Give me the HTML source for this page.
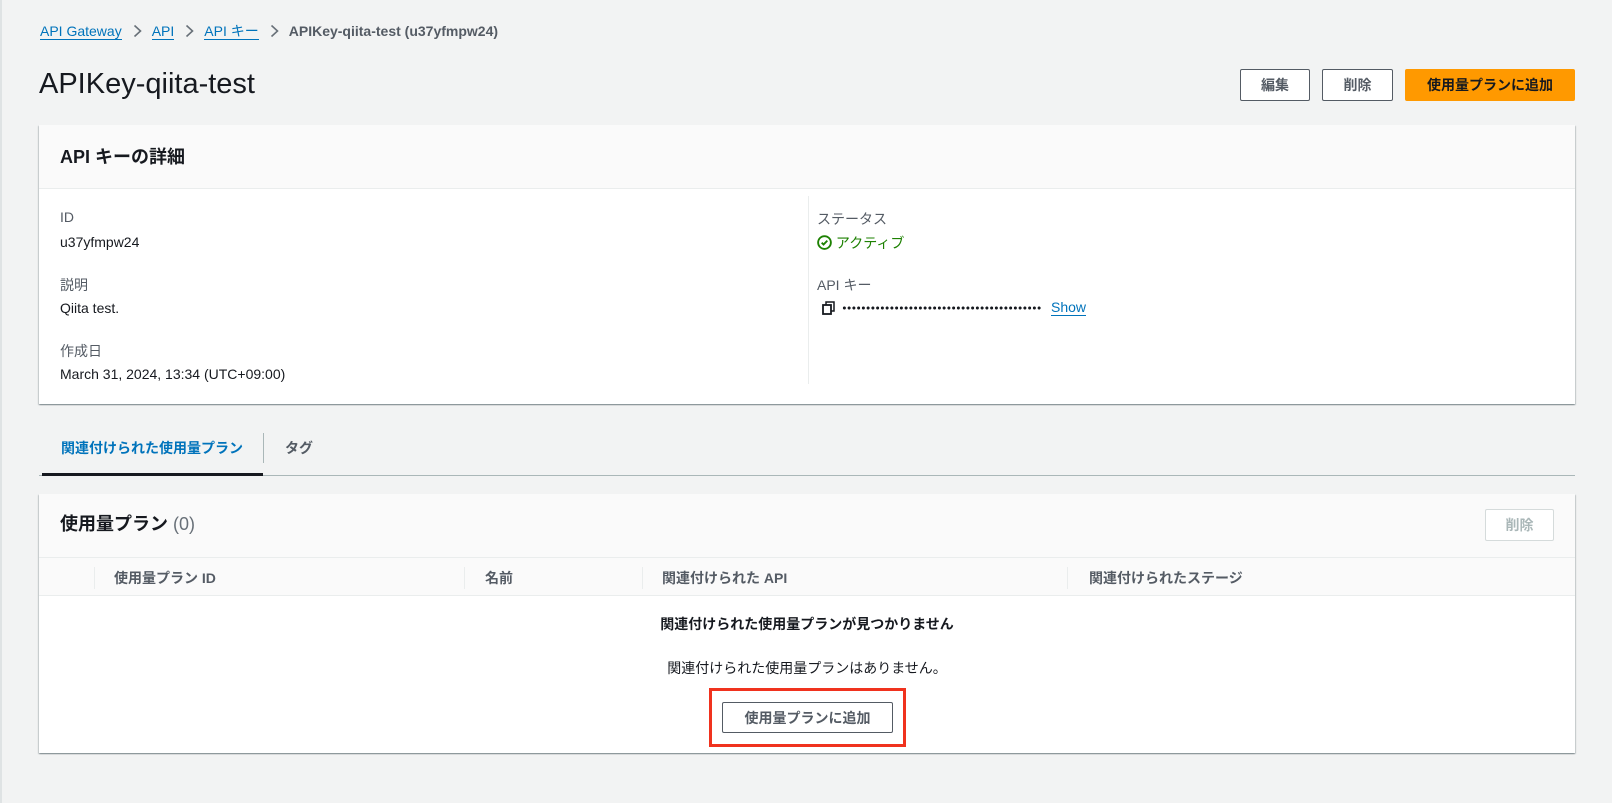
<!DOCTYPE html>
<html><head><meta charset="utf-8">
<style>
*{box-sizing:border-box;margin:0;padding:0}
body{width:1612px;height:803px;background:#f2f3f3;font-family:"Liberation Sans","Noto Sans CJK JP",sans-serif;font-size:14px;color:#16191f;position:relative;overflow:hidden}
.abs{position:absolute;white-space:nowrap}
.lb{border-left:2px solid #dfe3e4;position:absolute;left:0;top:0;bottom:0}
a{color:#0073bb;text-decoration:none;border-bottom:1px solid #0073bb}
.btn{position:absolute;border:1px solid #545b64;border-radius:2px;background:#fff;color:#545b64;font-weight:bold;font-size:14px;display:flex;align-items:center;justify-content:center}
.card{position:absolute;left:39px;width:1536px;background:#fff;box-shadow:0 1px 1px 0 rgba(0,28,36,.3),1px 1px 1px 0 rgba(0,28,36,.15),-1px 1px 1px 0 rgba(0,28,36,.15)}
.lbl{color:#545b64}
.chev{display:inline-block;vertical-align:-2px;margin:0 10px 0 11px}
</style></head><body>
<div class="lb"></div>
<div class="abs" style="left:40px;top:21px;font-size:14px;line-height:20px;color:#545b64">
<a>API Gateway</a><svg class="chev" width="9" height="14" viewBox="0 0 9 14"><path d="M1.5 1.5l6 5.5-6 5.5" fill="none" stroke="#687078" stroke-width="1.6"/></svg><a>API</a><svg class="chev" width="9" height="14" viewBox="0 0 9 14"><path d="M1.5 1.5l6 5.5-6 5.5" fill="none" stroke="#687078" stroke-width="1.6"/></svg><a>API キー</a><svg class="chev" width="9" height="14" viewBox="0 0 9 14"><path d="M1.5 1.5l6 5.5-6 5.5" fill="none" stroke="#687078" stroke-width="1.6"/></svg><b style="color:#545b64">APIKey-qiita-test (u37yfmpw24)</b>
</div>
<div class="abs" style="left:39px;top:66px;font-size:29px;line-height:36px">APIKey-qiita-test</div>
<div class="btn" style="left:1240px;top:69px;width:70px;height:32px">編集</div>
<div class="btn" style="left:1322px;top:69px;width:71px;height:32px">削除</div>
<div class="btn" style="left:1405px;top:69px;width:170px;height:32px;background:#ff9900;border-color:#ff9900;color:#16191f">使用量プランに追加</div>

<div class="card" style="top:125px;height:279px">
 <div style="height:64px;background:#fafafa;border-bottom:1px solid #eaeded"></div>
 <div class="abs" style="left:21px;top:20px;font-size:18px;font-weight:bold;line-height:24px">API キーの詳細</div>
 <div class="abs" style="left:769px;top:71px;width:1px;height:188px;background:#eaeded"></div>
 <div class="abs lbl" style="left:21px;top:84px">ID</div>
 <div class="abs" style="left:21px;top:109px">u37yfmpw24</div>
 <div class="abs lbl" style="left:21px;top:150px">説明</div>
 <div class="abs" style="left:21px;top:175px">Qiita test.</div>
 <div class="abs lbl" style="left:21px;top:216px">作成日</div>
 <div class="abs" style="left:21px;top:241px">March 31, 2024, 13:34 (UTC+09:00)</div>
 <div class="abs lbl" style="left:778px;top:84px">ステータス</div>
 <div class="abs" style="left:778px;top:108px;color:#1d8102"><svg width="15" height="15" viewBox="0 0 16 16" style="vertical-align:-2px"><circle cx="8" cy="8" r="6.8" fill="none" stroke="#1d8102" stroke-width="2"/><path d="M5 8.2l2 2 4-4.2" fill="none" stroke="#1d8102" stroke-width="2"/></svg> アクティブ</div>
 <div class="abs lbl" style="left:778px;top:150px">API キー</div>
 <svg class="abs" style="left:783px;top:176px" width="14" height="14" viewBox="0 0 14 14"><rect x="1" y="4" width="8" height="9" fill="none" stroke="#16191f" stroke-width="1.8"/><path d="M4 4V1h8v9H9" fill="none" stroke="#16191f" stroke-width="1.5"/></svg>
 <div class="abs" style="left:803px;top:181px;width:200px;height:4px;background:radial-gradient(circle,#16191f 1.4px,transparent 1.6px) 0 0/4.75px 4px repeat-x"></div>
 <div class="abs" style="left:1012px;top:174px"><a>Show</a></div>
</div>

<div class="abs" style="left:61px;top:438px;color:#0073bb;font-weight:bold">関連付けられた使用量プラン</div>
<div class="abs" style="left:263px;top:433px;width:1px;height:30px;background:#aab7b8"></div>
<div class="abs" style="left:285px;top:438px;color:#545b64;font-weight:bold">タグ</div>
<div class="abs" style="left:39px;top:475px;width:1536px;height:1px;background:#aab7b8"></div>
<div class="abs" style="left:42px;top:473px;width:221px;height:3px;background:#16191f"></div>

<div class="card" style="top:494px;height:259px">
 <div style="height:64px;background:#fafafa;border-bottom:1px solid #eaeded"></div>
 <div style="height:38px;background:#fafafa;border-bottom:1px solid #eaeded"></div>
 <div class="abs" style="left:21px;top:18px;font-size:18px;font-weight:bold;line-height:24px">使用量プラン <span style="font-weight:normal;color:#687078">(0)</span></div>
 <div class="btn" style="left:1446px;top:15px;width:69px;height:32px;border-color:#d5dbdb;color:#aab7b8">削除</div>
 <div class="abs" style="left:55px;top:73px;width:1px;height:22px;background:#eaeded"></div>
 <div class="abs" style="left:425px;top:73px;width:1px;height:22px;background:#eaeded"></div>
 <div class="abs" style="left:603px;top:73px;width:1px;height:22px;background:#eaeded"></div>
 <div class="abs" style="left:1028px;top:73px;width:1px;height:22px;background:#eaeded"></div>
 <div class="abs" style="left:75px;top:74px;font-weight:bold;color:#545b64">使用量プラン ID</div>
 <div class="abs" style="left:446px;top:74px;font-weight:bold;color:#545b64">名前</div>
 <div class="abs" style="left:623px;top:74px;font-weight:bold;color:#545b64">関連付けられた API</div>
 <div class="abs" style="left:1050px;top:74px;font-weight:bold;color:#545b64">関連付けられたステージ</div>
 <div class="abs" style="left:0;width:1536px;top:120px;text-align:center;font-weight:bold">関連付けられた使用量プランが見つかりません</div>
 <div class="abs" style="left:0;width:1536px;top:164px;text-align:center;color:#16191f">関連付けられた使用量プランはありません。</div>
 <div class="abs" style="left:670px;top:194px;width:197px;height:59px;border:3px solid #f0321e"></div>
 <div class="btn" style="left:683px;top:208px;width:171px;height:31px">使用量プランに追加</div>
</div>
</body></html>
